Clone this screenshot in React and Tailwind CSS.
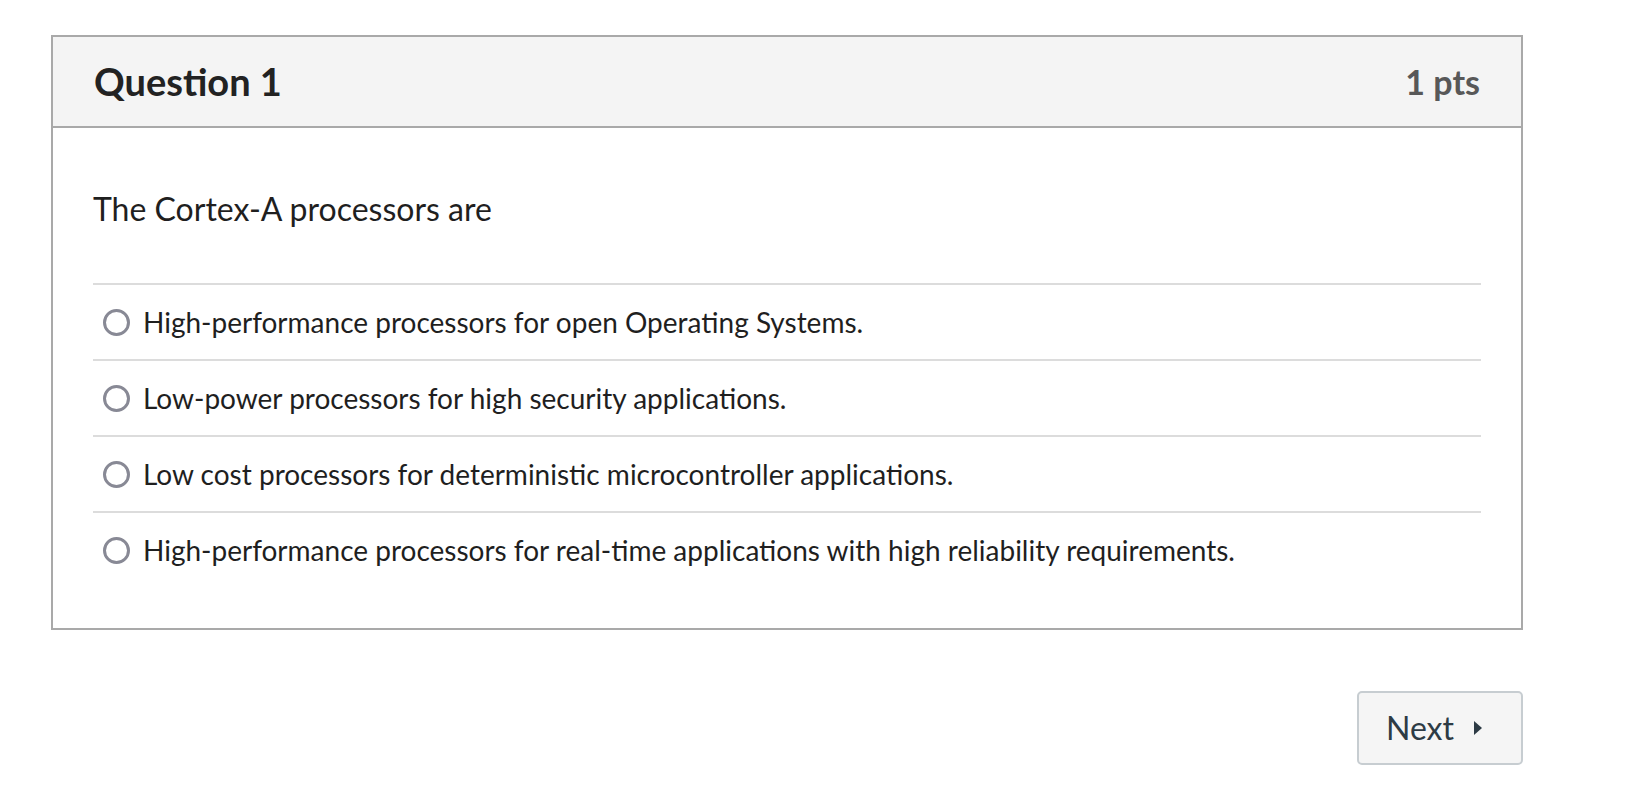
import React, { useState } from 'react';

const ANSWERS = [
  'High-performance processors for open Operating Systems.',
  'Low-power processors for high security applications.',
  'Low cost processors for deterministic microcontroller applications.',
  'High-performance processors for real-time applications with high reliability requirements.',
];

export default function App() {
  const [picked, setPicked] = useState(null);

  return (
    <div className="min-h-screen bg-white pt-[35px] pl-[51px] font-['Lato','Liberation_Sans',sans-serif] text-[#1f1f1f]">
      <div className="w-[1472px] border-2 border-[#a9a9a9]">
        <div className="flex items-center justify-between h-[91px] bg-[#f4f4f4] border-b-2 border-[#a9a9a9] pl-[41px] pr-[41px]">
          <h2 className="text-[38px] font-bold text-[#222]">Question 1</h2>
          <span className="text-[34px] font-bold text-[#585858]">1 pts</span>
        </div>
        <div className="px-[40px] pt-[56px] pb-[41px]">
          <p className="text-[32px] leading-[50px] mb-[49px]">The Cortex-A processors are</p>
          <div>
            {ANSWERS.map((a, i) => (
              <label
                key={i}
                className="flex items-center h-[76px] border-t-2 border-[#dcdcdc] cursor-pointer"
                onClick={() => setPicked(i)}
              >
                <span className="ml-[10px] w-[27px] h-[27px] rounded-full border-[3.5px] border-[#888995] flex items-center justify-center shrink-0">
                  {picked === i && <span className="w-[13px] h-[13px] rounded-full bg-[#888995]" />}
                </span>
                <span className="ml-[13px] text-[28px]">{a}</span>
              </label>
            ))}
          </div>
        </div>
      </div>
      <div className="w-[1472px] flex justify-end mt-[61px]">
        <button className="flex items-center h-[74px] w-[166px] pl-[27px] bg-[#f5f5f5] border-2 border-[#c7cdd1] rounded-[5px] text-[32px] text-[#2d3b45]">
          Next
          <svg width="10" height="14" viewBox="0 0 10 14" className="ml-[19px]">
            <path d="M1 0 L9 7 L1 14 Z" fill="#2d3b45" />
          </svg>
        </button>
      </div>
    </div>
  );
}
